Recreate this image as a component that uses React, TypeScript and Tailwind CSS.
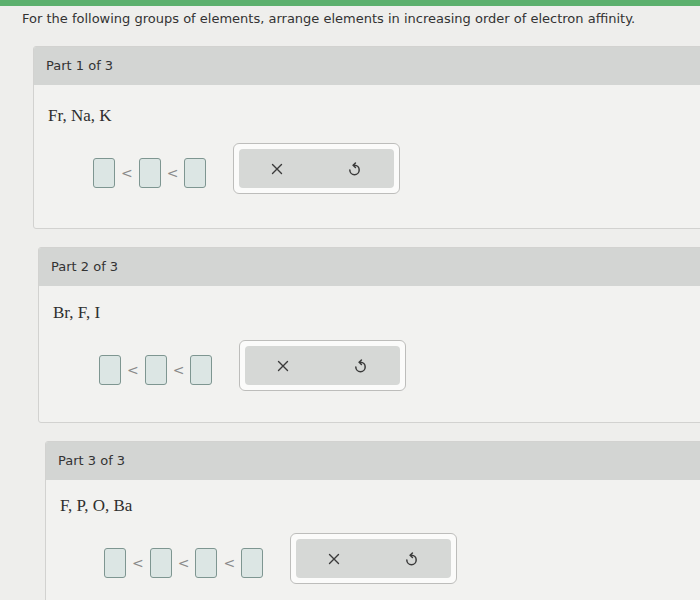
import React from "react";

const parts = [
  { label: "Part 1 of 3", elements: "Fr, Na, K", slots: 3, indent: "ml-[33px]", bodyH: "h-[143px]", pt: "pt-[21px]", rowMl: "ml-[45px]" },
  { label: "Part 2 of 3", elements: "Br, F, I", slots: 3, indent: "ml-[38px]", bodyH: "h-[136px]", pt: "pt-[17px]", rowMl: "ml-[46px]" },
  { label: "Part 3 of 3", elements: "F, P, O, Ba", slots: 4, indent: "ml-[45px]", bodyH: "h-[140px]", pt: "pt-[16px]", rowMl: "ml-[44px]" },
];

function UndoIcon() {
  return (
    <svg width="15" height="16" viewBox="0 0 16 16" fill="none" stroke="#3a3a3a" strokeWidth="1.6" strokeLinecap="round" strokeLinejoin="round">
      <path d="M9 1.6 L6.6 4 L9 6.4" />
      <path d="M6.8 4 H8 A5 5 0 1 1 3 9" />
    </svg>
  );
}

function XIcon() {
  return (
    <svg width="12" height="12" viewBox="0 0 12 12" stroke="#3a3a3a" strokeWidth="1.4" strokeLinecap="round">
      <path d="M1.5 1.5 L10.5 10.5 M10.5 1.5 L1.5 10.5" />
    </svg>
  );
}

function Slot() {
  return <div className="w-[22px] h-[30px] rounded-[3px] border-[1.5px] border-[#7e9691] bg-[#dce6e4]" />;
}

function Part({ p }: { p: (typeof parts)[number] }) {
  return (
    <div className={`${p.indent} w-[700px] border border-[#d2d2d0] rounded-[3px] bg-[#f2f2f0] overflow-hidden`}>
      {/* Header */}
      <div className="h-[38px] bg-[#d3d5d3] flex items-center pl-[12px] text-[13px] text-[#333]">
        {p.label}
      </div>

      {/* Body */}
      <div className={`${p.bodyH} ${p.pt} pl-[14px]`}>
        <div className="font-['Liberation_Serif',serif] text-[17px] leading-[20px] text-[#2e2e2e]">{p.elements}</div>
        <div className={`${p.rowMl} mt-[17px] flex items-start`}>
          <div className="flex items-center mt-[15px]">
            {Array.from({ length: p.slots }).map((_, i) => (
              <React.Fragment key={i}>
                {i > 0 && <span className="mx-[6px] text-[14px] leading-none text-[#8a8a8a]">&lt;</span>}
                <Slot />
              </React.Fragment>
            ))}
          </div>
          <div className="ml-[27px] w-[167px] h-[51px] rounded-[6px] border border-[#bdbdbb] bg-[#fbfbfa] p-[5px]">
            <div className="h-full rounded-[4px] bg-[#d6d8d6] flex items-center justify-around">
              <XIcon />
              <UndoIcon />
            </div>
          </div>
        </div>
      </div>
    </div>
  );
}

export default function App() {
  return (
    <div className="w-[700px] h-[600px] overflow-hidden bg-[#eeeeec] font-['DejaVu_Sans',sans-serif]">
      <div className="h-[6px] bg-[#5cb06e]" />
      <p className="ml-[22px] mt-[4px] text-[13px] leading-[17px] text-[#333]">
        For the following groups of elements, arrange elements in increasing order of electron affinity.
      </p>
      <div className="mt-[19px] flex flex-col gap-[18px]">
        {parts.map((p) => (
          <Part key={p.label} p={p} />
        ))}
      </div>
    </div>
  );
}
